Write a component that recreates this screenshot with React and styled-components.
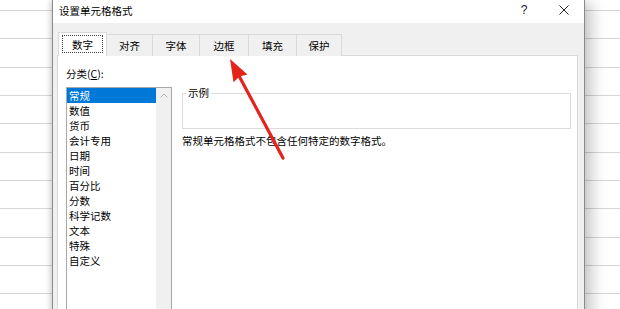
import React from "react";
import styled, { createGlobalStyle } from "styled-components";

const GlobalStyle = createGlobalStyle`
  html, body {
    margin: 0;
    padding: 0;
    overflow: hidden;
    background: #fff;
  }
  body {
    font-family: "Noto Sans CJK SC", "Noto Sans", sans-serif;
    font-size: 10.5px;
    color: #000;
  }
`;

const Screen = styled.div`
  position: relative;
  width: 620px;
  height: 309px;
  overflow: hidden;
  display: flex;
  background-color: #fff;
  background-image: repeating-linear-gradient(
    to bottom,
    #d6d6d6 0 1px,
    transparent 1px 28.333px
  );
  background-position: 0 10px;
`;

const Dialog = styled.div`
  margin-left: 52px;
  width: 533px;
  height: 330px;
  display: flex;
  flex-direction: column;
  border-left: 1px solid #8a8a8a;
  border-right: 1px solid #8a8a8a;
  box-shadow: 7px 3px 14px rgba(0, 0, 0, 0.22), -2px 0 5px rgba(0, 0, 0, 0.14);
  box-sizing: border-box;
`;

const TitleBar = styled.div`
  height: 23px;
  flex: none;
  display: flex;
  align-items: center;
  background: #fff;
  padding-left: 6px;
`;

const Title = styled.span`
  font-size: 10.5px;
  line-height: 14px;
  padding-bottom: 1px;
`;

const TitleButton = styled.div`
  width: 40px;
  height: 23px;
  display: flex;
  align-items: center;
  justify-content: center;
  padding-bottom: 3px;
  box-sizing: border-box;
  margin-left: ${(p) => (p.$first ? "auto" : "0")};
  font-family: "Liberation Sans", sans-serif;
  font-size: 12px;
  color: #222;
`;

const Body = styled.div`
  flex: 1;
  display: flex;
  flex-direction: column;
  background: #f0f0f0;
  padding: 9px 6px 0 4px;
`;

const TabRow = styled.div`
  display: flex;
  align-items: flex-end;
  height: 24px;
  padding-left: 1px;
  margin-bottom: -1px;
  position: relative;
  z-index: 1;
`;

const Tab = styled.div`
  box-sizing: border-box;
  width: ${(p) => p.$w}px;
  height: ${(p) => (p.$active ? 24 : 22)}px;
  display: flex;
  align-items: center;
  justify-content: center;
  background: ${(p) => (p.$active ? "#fff" : "#f0f0f0")};
  border-top: 1px solid #d9d9d9;
  border-right: 1px solid #d9d9d9;
  border-left: ${(p) => (p.$active ? "1px solid #d9d9d9" : "none")};
  padding-bottom: ${(p) => (p.$active ? 3 : 1)}px;
  font-size: 10.5px;
`;

const FocusRing = styled.span`
  display: flex;
  align-items: center;
  justify-content: center;
  width: 41px;
  height: 18px;
  box-sizing: border-box;
  border: 1px dotted #444;
  margin-top: 2px;
`;

const Pane = styled.div`
  flex: 1;
  background: #fff;
  border: 1px solid #d9d9d9;
  border-bottom: none;
  padding: 11px 6px 0 8px;
  display: grid;
  grid-template-columns: 106px 1fr;
  grid-template-rows: 20px auto;
  column-gap: 10px;
  align-content: start;
`;

const FieldLabel = styled.div`
  line-height: 14px;
  font-size: 10.5px;
  u {
    text-decoration: underline;
    text-underline-offset: 1px;
  }
`;

const ListBox = styled.div`
  height: 230px;
  display: flex;
  border: 1px solid #a8a8a8;
  background: #fff;
`;

const Items = styled.div`
  flex: 1;
  display: flex;
  flex-direction: column;
`;

const Item = styled.div`
  height: 15px;
  line-height: 15px;
  padding-left: 2px;
  font-size: 10.5px;
  background: ${(p) => (p.$selected ? "#0078d7" : "transparent")};
  color: ${(p) => (p.$selected ? "#fff" : "#000")};
`;

const ScrollBar = styled.div`
  width: 15px;
  background: #f0f0f0;
  display: flex;
  flex-direction: column;
  align-items: center;
`;

const ScrollArrow = styled.div`
  height: 15px;
  display: flex;
  align-items: center;
  justify-content: center;
`;

const RightColumn = styled.div`
  display: flex;
  flex-direction: column;
`;

const Group = styled.fieldset`
  margin: 0;
  padding: 0;
  min-width: 0;
  border: 1px solid #dcdcdc;
`;

const GroupTitle = styled.legend`
  padding: 0 2px;
  margin-left: 3px;
  line-height: 12px;
  font-size: 10.5px;
`;

const Sample = styled.div`
  height: 29px;
`;

const Description = styled.div`
  margin-top: 5px;
  line-height: 14px;
  font-size: 10.5px;
`;

const Overlay = styled.svg`
  position: absolute;
  left: 0;
  top: 0;
  pointer-events: none;
`;

const tabs = [
  { label: "数字", w: 49, active: true },
  { label: "对齐", w: 46 },
  { label: "字体", w: 47 },
  { label: "边框", w: 49 },
  { label: "填充", w: 48 },
  { label: "保护", w: 45 },
];

const categories = [
  "常规",
  "数值",
  "货币",
  "会计专用",
  "日期",
  "时间",
  "百分比",
  "分数",
  "科学记数",
  "文本",
  "特殊",
  "自定义",
];

export default function App() {
  return (
    <Screen>
      <GlobalStyle />
      <Dialog>
        <TitleBar>
          <Title>设置单元格格式</Title>
          <TitleButton $first>?</TitleButton>
          <TitleButton>
            <svg width="10" height="10" viewBox="0 0 10 10">
              <path d="M0.5 0.5 L9.5 9.5 M9.5 0.5 L0.5 9.5" stroke="#222" strokeWidth="1" fill="none" />
            </svg>
          </TitleButton>
        </TitleBar>
        <Body>
          <TabRow>
            {tabs.map((t) =>
              t.active ? (
                <Tab key={t.label} $w={t.w} $active>
                  <FocusRing>{t.label}</FocusRing>
                </Tab>
              ) : (
                <Tab key={t.label} $w={t.w}>
                  {t.label}
                </Tab>
              )
            )}
          </TabRow>
          <Pane>
            <FieldLabel>
              分类(<u>C</u>):
            </FieldLabel>
            <div />
            <ListBox>
              <Items>
                {categories.map((c, i) => (
                  <Item key={c} $selected={i === 0}>
                    {c}
                  </Item>
                ))}
              </Items>
              <ScrollBar>
                <ScrollArrow>
                  <svg width="8" height="5" viewBox="0 0 8 5">
                    <path d="M0.5 4.5 L4 1 L7.5 4.5" stroke="#b4b4b4" strokeWidth="1" fill="none" />
                  </svg>
                </ScrollArrow>
              </ScrollBar>
            </ListBox>
            <RightColumn>
              <Group>
                <GroupTitle>示例</GroupTitle>
                <Sample />
              </Group>
              <Description>常规单元格格式不包含任何特定的数字格式。</Description>
            </RightColumn>
          </Pane>
        </Body>
      </Dialog>
      <Overlay width="620" height="309" viewBox="0 0 620 309">
        <line x1="283" y1="158" x2="238" y2="74" stroke="#e3231c" strokeWidth="3.2" strokeLinecap="round" />
        <polygon points="230,59 247.5,74.6 239.5,76.5 233.5,82.2" fill="#e3231c" />
      </Overlay>
    </Screen>
  );
}
